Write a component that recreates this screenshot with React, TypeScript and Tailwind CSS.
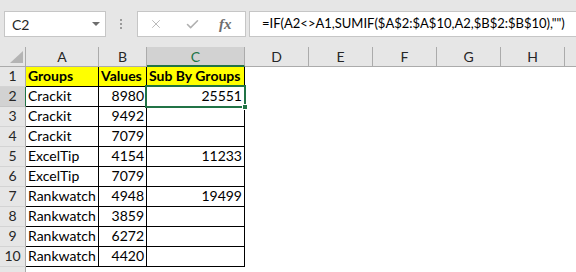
import { Check, X } from "lucide-react";

type Row = { n: number; a: string; b: string; c: string };

const rows: Row[] = [
  { n: 2, a: "Crackit", b: "8980", c: "25551" },
  { n: 3, a: "Crackit", b: "9492", c: "" },
  { n: 4, a: "Crackit", b: "7079", c: "" },
  { n: 5, a: "ExcelTip", b: "4154", c: "11233" },
  { n: 6, a: "ExcelTip", b: "7079", c: "" },
  { n: 7, a: "Rankwatch", b: "4948", c: "19499" },
  { n: 8, a: "Rankwatch", b: "3859", c: "" },
  { n: 9, a: "Rankwatch", b: "6272", c: "" },
  { n: 10, a: "Rankwatch", b: "4420", c: "" },
];

const font = { fontFamily: "Lato, 'Open Sans', sans-serif" };

const RowHead = ({ n, active }: { n?: number; active?: boolean }) => (
  <div
    className={`flex h-[20px] w-[26px] shrink-0 items-end justify-center border-r border-b pb-[1px] text-[14px] leading-[18px] text-[#262626] ${
      active ? "border-r-[#217346] border-b-[#c6c6c6] bg-[#d2d2d2]" : "border-r-[#ababab] border-b-[#d4d4d4] bg-[#e6e6e6]"
    }`}
  >
    {n}
  </div>
);

const Cell = ({ w, right, children, fill }: { w: string; right?: boolean; children?: React.ReactNode; fill?: boolean }) => (
  <div
    className={`flex h-[20px] shrink-0 items-end border-r border-b border-black pb-[1px] text-[14px] leading-[18px] whitespace-nowrap text-black ${w} ${
      right ? "justify-end pr-[2px]" : "pl-[2px]"
    } ${fill ? "bg-[#ffff00] font-bold" : ""}`}
  >
    {children}
  </div>
);

const ColHead = ({ w, label, active }: { w: string; label?: string; active?: boolean }) => (
  <div
    className={`flex h-[20px] shrink-0 items-center justify-center border-r text-[14px] ${w} ${
      active
        ? "border-r-[#ababab] border-b-2 border-b-[#217346] bg-[#d2d2d2] text-[#217346]"
        : "border-b border-r-[#ababab] border-b-[#ababab] bg-[#e6e6e6] text-[#262626]"
    }`}
  >
    {label}
  </div>
);

export default function App() {
  return (
    <div className="relative h-[272px] w-[576px] overflow-hidden bg-white" style={font}>
      {/* formula bar */}
      <div className="flex h-[47px] items-start bg-[#e6e6e6] pt-[11px] pl-[4px]">
        <div className="flex h-[26px] w-[102px] shrink-0 items-center justify-between border border-[#c6c6c6] bg-white pr-[5px] pl-[7px] text-[14px] text-[#262626]">
          <span>C2</span>
          <span className="h-0 w-0 border-x-[4px] border-t-[4px] border-x-transparent border-t-[#6d6d6d]" />
        </div>
        <div className="ml-[14px] flex h-[26px] w-[2px] shrink-0 flex-col items-center justify-center gap-[2px]">
          <span className="h-[2px] w-[2px] bg-[#9b9b9b]" />
          <span className="h-[2px] w-[2px] bg-[#9b9b9b]" />
          <span className="h-[2px] w-[2px] bg-[#9b9b9b]" />
        </div>
        <div className="ml-[15px] flex h-[26px] w-[109px] shrink-0 items-center border border-[#c6c6c6] bg-white">
          <X className="ml-[11px] h-[14px] w-[14px] text-[#b0b0b0]" strokeWidth={1.5} />
          <Check className="ml-[22px] h-[15px] w-[15px] text-[#b0b0b0]" strokeWidth={2.5} />
          <span
            className="ml-[19px] text-[15px] font-bold text-[#6d6d6d] italic"
            style={{ fontFamily: "'Liberation Serif', serif" }}
          >
            fx
          </span>
        </div>
        <div className="ml-[3px] flex h-[26px] min-w-0 flex-1 items-center overflow-hidden border border-r-0 border-[#c6c6c6] bg-white pl-[12px] text-[13px] whitespace-nowrap text-black">
          =IF(A2&lt;&gt;A1,SUMIF($A$2:$A$10,A2,$B$2:$B$10),"")
        </div>
      </div>

      {/* column headers */}
      <div className="flex">
        <div className="flex h-[20px] w-[26px] shrink-0 items-end justify-end border-r border-b border-r-[#ababab] border-b-[#ababab] bg-[#e6e6e6] pr-[2px] pb-[3px]">
          <svg width="13" height="12" viewBox="0 0 13 12">
            <polygon points="13,0 13,12 0,12" fill="#b4b4b4" />
          </svg>
        </div>
        <ColHead w="w-[73px]" label="A" />
        <ColHead w="w-[48px]" label="B" />
        <ColHead w="w-[98px]" label="C" active />
        <ColHead w="w-[64px]" label="D" />
        <ColHead w="w-[64px]" label="E" />
        <ColHead w="w-[64px]" label="F" />
        <ColHead w="w-[64px]" label="G" />
        <ColHead w="w-[64px]" label="H" />
        <ColHead w="w-[64px]" />
      </div>

      {/* row 1 */}
      <div className="flex">
        <RowHead n={1} />
        <Cell w="w-[73px]" fill>Groups</Cell>
        <Cell w="w-[48px]" fill>Values</Cell>
        <Cell w="w-[98px]" fill>Sub By Groups</Cell>
      </div>

      {rows.map((r) => (
        <div key={r.n} className="flex">
          <RowHead n={r.n} active={r.n === 2} />
          <Cell w="w-[73px]">{r.a}</Cell>
          <Cell w="w-[48px]" right>{r.b}</Cell>
          <Cell w="w-[98px]" right>{r.c}</Cell>
        </div>
      ))}

      <div className="flex">
        <RowHead />
      </div>

      {/* active cell C2 */}
      <div className="absolute top-[85px] left-[145px] h-[23px] w-[101px] border-2 border-[#217346]" />
      <div className="absolute top-[104px] left-[242px] h-[6px] w-[6px] border border-white bg-[#217346]" />
    </div>
  );
}
